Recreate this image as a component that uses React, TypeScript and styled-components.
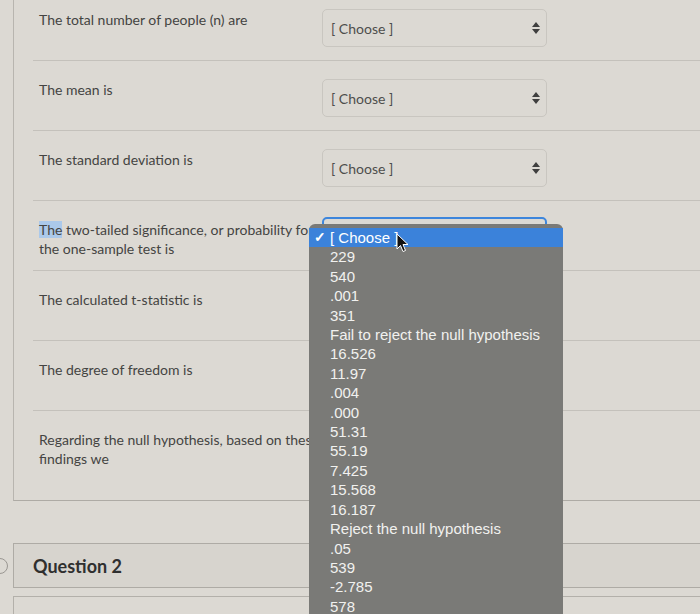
import styled, { createGlobalStyle } from 'styled-components';

const GlobalStyle = createGlobalStyle`
    body {
        margin: 0;
        background: #dcd9d3;
        font-family: Lato, "Open Sans", sans-serif;
        overflow: hidden;
    }
`

const Page = styled.div`
    position: relative;
    height: 614px;
    overflow: hidden;
    padding-left: 13px;
`

const Card = styled.div`
    margin-top: -9px;
    padding-left: 19px;
    border-left: 1px solid #b8b5af;
    border-bottom: 1px solid #aeaba5;
`

const Row = styled.div<{ $height?: number; $last?: boolean }>`
    display: flex;
    align-items: flex-start;
    box-sizing: border-box;
    height: ${p => p.$height || 70}px;
    border-bottom: ${p => (p.$last ? 'none' : '1px solid #c4c1bb')};
`

const Label = styled.div`
    width: 283px;
    padding: 19px 0 0 6px;
    font-size: 14px;
    line-height: 19px;
    color: #444442;
`

const Highlight = styled.span`
    background: #abc9ea;
`

const SelectBox = styled.div<{ $open?: boolean }>`
    box-sizing: border-box;
    display: flex;
    align-items: center;
    justify-content: space-between;
    width: 225px;
    height: 38px;
    margin-top: ${p => (p.$open ? 16 : 18)}px;
    padding: 0 6px 0 8px;
    border: ${p => (p.$open ? '2px solid #3d86dc' : '1px solid #c9c6c0')};
    border-radius: 5px;
    font-size: 14px;
    color: #4e4e4c;
`

const Arrows = () => (
    <svg width="8" height="12" viewBox="0 0 8 12">
        <path d="M4 0 L8 5 H0 Z M4 12 L8 7 H0 Z" fill="#3f3f3f" />
    </svg>
)

const Menu = styled.div`
    position: absolute;
    left: 309px;
    top: 224px;
    width: 254px;
    height: 420px;
    padding-top: 4px;
    background: #7a7a77;
    border-radius: 6px 6px 0 0;
    font-family: "Liberation Sans", Arial, sans-serif;
    font-size: 15px;
    color: #f3f3f1;
`

const Item = styled.div<{ $active?: boolean }>`
    position: relative;
    height: 19.42px;
    line-height: 19.42px;
    padding-left: 21px;
    background: ${p => (p.$active ? '#3b82da' : 'transparent')};
    color: ${p => (p.$active ? '#ffffff' : '#f1f1ef')};
`

const Check = styled.span`
    position: absolute;
    left: 5px;
    font-size: 14px;
    font-weight: 700;
`

const Cursor = styled.svg`
    position: absolute;
    left: 396px;
    top: 233px;
`

const Gap = styled.div`
    height: 42px;
`

const QuestionHeader = styled.div`
    position: relative;
    display: flex;
    align-items: center;
    box-sizing: border-box;
    height: 45px;
    padding-left: 19px;
    background: #d7d4ce;
    border: 1px solid #aeaba5;
    border-right: none;
    font-size: 18px;
    font-weight: 700;
    color: #2f2f2f;

    &::before {
        content: '';
        position: absolute;
        left: -22px;
        top: 14px;
        width: 14px;
        height: 14px;
        border: 1px solid #9a9792;
        border-radius: 50%;
    }
`

const QuestionBody = styled.div`
    height: 40px;
    margin-top: 8px;
    border-top: 1px solid #b3b0aa;
    border-left: 1px solid #b3b0aa;
`

const options = [
    '229', '540', '.001', '351', 'Fail to reject the null hypothesis', '16.526', '11.97',
    '.004', '.000', '51.31', '55.19', '7.425', '15.568', '16.187',
    'Reject the null hypothesis', '.05', '539', '-2.785', '578',
]

function Select({ open }: { open?: boolean }) {
    return (
        <SelectBox $open={open}>
            <span>[ Choose ]</span>
            <Arrows />
        </SelectBox>
    )
}

export default function App() {
    return (
        <Page>
            <GlobalStyle />
            <Card>
                <Row>
                    <Label>The total number of people (n) are</Label>
                    <Select />
                </Row>
                <Row>
                    <Label>The mean is</Label>
                    <Select />
                </Row>
                <Row>
                    <Label>The standard deviation is</Label>
                    <Select />
                </Row>
                <Row>
                    <Label>
                        <Highlight>The</Highlight> two-tailed significance, or probability for<br />
                        the one-sample test is
                    </Label>
                    <Select open />
                </Row>
                <Row>
                    <Label>The calculated t-statistic is</Label>
                    <Select />
                </Row>
                <Row>
                    <Label>The degree of freedom is</Label>
                    <Select />
                </Row>
                <Row $height={89} $last>
                    <Label>
                        Regarding the null hypothesis, based on these<br />
                        findings we
                    </Label>
                    <Select />
                </Row>
            </Card>

            <Gap />
            <QuestionHeader>Question 2</QuestionHeader>
            <QuestionBody />

            <Menu>
                <Item $active><Check>✓</Check>[ Choose ]</Item>
                {options.map(o => (
                    <Item key={o}>{o}</Item>
                ))}
            </Menu>

            <Cursor width="13" height="20" viewBox="0 0 13 20">
                <path d="M1 1 L1 16 L4.5 12.5 L7 18.5 L9.5 17.5 L7 11.5 L12 11.5 Z" fill="#111" stroke="#fff" strokeWidth="1" />
            </Cursor>
        </Page>
    )
}
